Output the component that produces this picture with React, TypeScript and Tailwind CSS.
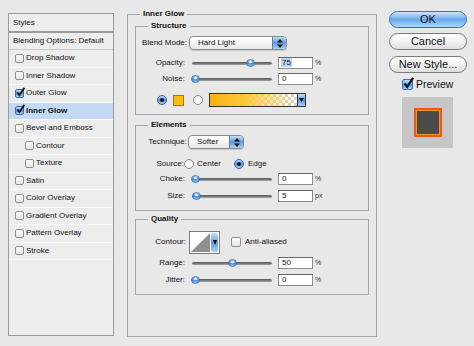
import React from "react";

function Box({ checked = false, size = "s" }: { checked?: boolean; size?: "s" | "m" | "l" }) {
  const dim =
    size === "l" ? "w-[11px] h-[11px]" : size === "m" ? "w-[10px] h-[10px]" : "w-[9px] h-[9px]";
  return (
    <span
      className={`relative inline-block shrink-0 rounded-[2px] border ${dim} ${
        checked
          ? "border-[#3b6cb0] bg-linear-to-b from-[#c2def9] via-[#5f9fe3] to-[#9fcdf7]"
          : "border-[#8e8e8e] bg-linear-to-b from-white to-[#e4e4e4]"
      }`}
    >
      {checked && (
        <svg
          className={`absolute left-[0px] ${size === "l" ? "top-[-3px]" : "top-[-3px]"}`}
          width={size === "l" ? 11 : 9}
          height={size === "l" ? 12 : 10}
          viewBox="0 0 10 11"
        >
          <path d="M1.3 6 L3.8 9 L9.3 0.8" fill="none" stroke="#151515" strokeWidth="2" />
        </svg>
      )}
    </span>
  );
}

function Radio({ on = false }: { on?: boolean }) {
  return on ? (
    <span className="flex h-[10px] w-[10px] shrink-0 items-center justify-center rounded-full border border-[#35609f] bg-linear-to-b from-[#c0defa] via-[#4f92dd] to-[#a5d2f8]">
      <span className="h-[4px] w-[4px] rounded-full bg-[#1a1a1a]" />
    </span>
  ) : (
    <span className="block h-[10px] w-[10px] shrink-0 rounded-full border border-[#8a8a8a] bg-linear-to-b from-[#eeeeee] to-white" />
  );
}

function Slider({ v }: { v: number }) {
  return (
    <div className="relative h-[12px] w-[82px] shrink-0">
      <div className="absolute left-[1px] right-[1px] top-[5px] h-[3px] rounded-full bg-linear-to-b from-[#555555] to-[#a5a5a5]" />
      <svg
        className="absolute top-[2px]"
        style={{ left: v * 73 }}
        width="9"
        height="8"
        viewBox="0 0 9 8"
      >
        <defs>
          <linearGradient id="thumbg" x1="0" y1="0" x2="0" y2="1">
            <stop offset="0" stopColor="#b9d9f8" />
            <stop offset="0.55" stopColor="#4a8cd8" />
            <stop offset="1" stopColor="#9ccaf5" />
          </linearGradient>
        </defs>
        <ellipse cx="4.5" cy="4" rx="4" ry="3.5" fill="url(#thumbg)" stroke="#3b68a8" strokeWidth="0.8" />
        <ellipse cx="4.5" cy="3.2" rx="1.6" ry="1.1" fill="#eaf4ff" />
      </svg>
    </div>
  );
}

function Field({ children, sel = false }: { children: React.ReactNode; sel?: boolean }) {
  return (
    <div className="h-[12px] w-[35px] shrink-0 border border-[#8c8c8c] border-t-[#666666] bg-white pl-[2px] text-[8px] leading-[10px]">
      {sel ? <span className="bg-[#b4d4fa] px-[1px]">{children}</span> : <span className="px-[1px]">{children}</span>}
    </div>
  );
}

function Arrows() {
  return (
    <svg width="6" height="9" viewBox="0 0 6 9">
      <path d="M3 0 L6 3.5 H0 Z M3 9 L0 5.5 H6 Z" fill="#111" />
    </svg>
  );
}

function Popup({ label, wide }: { label: string; wide?: boolean }) {
  return (
    <div
      className={`flex h-[14px] shrink-0 overflow-hidden rounded-[4px] border border-[#8a8a8a] bg-linear-to-b from-white to-[#e9e9e9] shadow-[0_1px_1px_rgba(0,0,0,0.15)] ${
        wide ? "w-[98px]" : "w-[56px]"
      }`}
    >
      <span className="flex-1 pl-[8px] text-[8px] leading-[12px]">{label}</span>
      <span className="flex w-[14px] items-center justify-center border-l border-[#5a7fb5] bg-linear-to-b from-[#c4e0fa] via-[#5a9ae0] to-[#a7d1f8]">
        <Arrows />
      </span>
    </div>
  );
}

function SliderRow({
  label,
  v,
  val,
  unit = "%",
  mt,
  sel,
}: {
  label: string;
  v: number;
  val: string;
  unit?: string;
  mt: string;
  sel?: boolean;
}) {
  return (
    <div className={`flex h-[12px] items-center ${mt}`}>
      <span className="w-[49px] shrink-0 text-right text-[8px] leading-[10px]">{label}</span>
      <span className="ml-[6px]">
        <Slider v={v} />
      </span>
      <span className="ml-[5px]">
        <Field sel={sel}>{val}</Field>
      </span>
      <span className="ml-[2px] text-[7px] leading-[10px] text-[#333]">{unit}</span>
    </div>
  );
}

const styleItems: { name: string; checked?: boolean; sel?: boolean; indent?: boolean }[] = [
  { name: "Drop Shadow" },
  { name: "Inner Shadow" },
  { name: "Outer Glow", checked: true },
  { name: "Inner Glow", checked: true, sel: true },
  { name: "Bevel and Emboss" },
  { name: "Contour", indent: true },
  { name: "Texture", indent: true },
  { name: "Satin" },
  { name: "Color Overlay" },
  { name: "Gradient Overlay" },
  { name: "Pattern Overlay" },
  { name: "Stroke" },
];

export default function App() {
  return (
    <div className="flex h-[346px] w-[474px] items-start overflow-hidden bg-[#e8e8e8] pl-[8px] pt-[8px] font-['Liberation_Sans',Arial,sans-serif] text-[#111]">
      {/* Styles list */}
      <div className="mt-[5px] flex h-[323px] w-[106px] shrink-0 flex-col border border-[#9b9b9b] bg-[#ededed]">
        <div className="flex h-[19px] shrink-0 items-center border-b-2 border-[#9a9a9a] pl-[4px] text-[8px]">
          Styles
        </div>
        <div className="flex h-[17px] shrink-0 items-center border-b border-[#c9c9c9] pl-[4px] text-[8px]">
          Blending Options: Default
        </div>
        {styleItems.map((it) => (
          <div
            key={it.name}
            className={`flex h-[17.5px] shrink-0 items-center border-b border-[#f8f8f8] text-[8px] ${
              it.indent ? "pl-[16px]" : "pl-[6px]"
            } ${it.sel ? "bg-[#c3d9f4] font-bold" : ""}`}
          >
            <Box checked={it.checked} />
            <span className="ml-[2px]">{it.name}</span>
          </div>
        ))}
      </div>

      {/* Inner Glow group */}
      <fieldset className="ml-[13px] mt-[1px] h-[328px] w-[250px] shrink-0 border border-[#a6a6a6] px-[7px] pt-[2px]">
        <legend className="ml-[5px] px-[3px] text-[8px] font-bold leading-[10px]">Inner Glow</legend>

        {/* Structure */}
        <fieldset className="h-[94px] w-[234px] border border-[#a6a6a6]">
          <legend className="ml-[12px] px-[3px] text-[8px] font-bold leading-[10px]">Structure</legend>
          <div className="mt-[5px] flex h-[14px] items-center">
            <span className="w-[51px] shrink-0 text-right text-[8px] leading-[10px]">Blend Mode:</span>
            <span className="ml-[2px]">
              <Popup label="Hard Light" wide />
            </span>
          </div>
          <SliderRow label="Opacity:" v={0.75} val="75" mt="mt-[7px]" sel />
          <SliderRow label="Noise:" v={0} val="0" mt="mt-[4px]" />
          <div className="mt-[8px] flex h-[14px] items-center pl-[21px]">
            <Radio on />
            <span className="ml-[6px] h-[11px] w-[11px] shrink-0 border border-[#a07a10] bg-[#fdbd12]" />
            <span className="ml-[9px]">
              <Radio />
            </span>
            <div className="ml-[6px] flex h-[14px] w-[97px] shrink-0 border border-[#333333]">
              <div className="flex-1 bg-[repeating-conic-gradient(#d4d4d4_0%_25%,#ffffff_0%_50%)] bg-[length:6px_6px]">
                <div className="h-full w-full bg-linear-to-r from-[#fdb200] via-[#fdc83a] via-40% to-[rgba(255,220,120,0)]" />
              </div>
              <div className="flex w-[8px] items-center justify-center border-l border-[#333] bg-linear-to-b from-[#c4e0fa] via-[#5a9ae0] to-[#a7d1f8]">
                <svg width="5" height="4" viewBox="0 0 5 4">
                  <path d="M0 0 H5 L2.5 4 Z" fill="#111" />
                </svg>
              </div>
            </div>
          </div>
        </fieldset>

        {/* Elements */}
        <fieldset className="mt-[5px] h-[91px] w-[234px] border border-[#a6a6a6]">
          <legend className="ml-[12px] px-[3px] text-[8px] font-bold leading-[10px]">Elements</legend>
          <div className="mt-[5px] flex h-[14px] items-center">
            <span className="w-[51px] shrink-0 text-right text-[8px] leading-[10px]">Technique:</span>
            <span className="ml-[1px]">
              <Popup label="Softer" />
            </span>
          </div>
          <div className="mt-[9px] flex h-[12px] items-center text-[8px] leading-[10px]">
            <span className="w-[48px] shrink-0 text-right">Source:</span>
            <Radio />
            <span className="ml-[3px]">Center</span>
            <span className="ml-[13px]">
              <Radio on />
            </span>
            <span className="ml-[4px]">Edge</span>
          </div>
          <SliderRow label="Choke:" v={0} val="0" mt="mt-[3px]" />
          <SliderRow label="Size:" v={0.02} val="5" unit="px" mt="mt-[5px]" />
        </fieldset>

        {/* Quality */}
        <fieldset className="mt-[3px] h-[81px] w-[234px] border border-[#a6a6a6]">
          <legend className="ml-[12px] px-[3px] text-[8px] font-bold leading-[10px]">Quality</legend>
          <div className="mt-[7px] flex h-[22px] items-center">
            <span className="w-[50px] shrink-0 text-right text-[8px] leading-[10px]">Contour:</span>
            <div className="ml-[3px] flex h-[23px] w-[31px] shrink-0 border border-[#7a7a7a] bg-white">
              <svg className="flex-1" viewBox="0 0 23 21" preserveAspectRatio="none">
                <polygon points="1,20 22,1 22,20" fill="#8f8f8f" />
              </svg>
              <div className="my-[1px] mr-[1px] flex w-[7px] items-center justify-center rounded-[2px] bg-linear-to-b from-[#c4e0fa] via-[#5a9ae0] to-[#a7d1f8]">
                <svg width="4" height="5" viewBox="0 0 4 5">
                  <path d="M0 0 H4 L2 5 Z" fill="#111" />
                </svg>
              </div>
            </div>
            <span className="ml-[11px] flex">
              <Box size="m" />
            </span>
            <span className="ml-[4px] text-[8px] leading-[10px]">Anti-aliased</span>
          </div>
          <SliderRow label="Range:" v={0.5} val="50" mt="mt-[4px]" />
          <SliderRow label="Jitter:" v={0} val="0" mt="mt-[5px]" />
        </fieldset>
      </fieldset>

      {/* Right column */}
      <div className="ml-[12px] mt-[3px] flex w-[78px] shrink-0 flex-col">
        <div className="flex h-[17px] items-center justify-center rounded-full border border-[#3e6db1] bg-linear-to-b from-[#cfe6fb] via-[#6aa9ec] to-[#aad6fb] text-[11px] leading-none">
          OK
        </div>
        <div className="mt-[5px] flex h-[17px] items-center justify-center rounded-full border border-[#7a7a7a] bg-linear-to-b from-white via-[#f3f3f3] to-[#dcdcdc] text-[11px] leading-none">
          Cancel
        </div>
        <div className="mt-[6px] flex h-[17px] items-center justify-center rounded-full border border-[#7a7a7a] bg-linear-to-b from-white via-[#f3f3f3] to-[#dcdcdc] text-[11px] leading-none">
          New Style...
        </div>
        <div className="ml-[13px] mt-[5px] flex h-[13px] items-center">
          <Box checked size="l" />
          <span className="ml-[3px] text-[10.5px] leading-none">Preview</span>
        </div>
        <div className="ml-[13px] mt-[6px] flex h-[51px] w-[51px] items-center justify-center bg-[#c6c6c6]">
          <div className="h-[29px] w-[28px] border-2 border-[#f4511c] bg-[#4a4a4a] shadow-[inset_0_0_0_1px_#e0a020]" />
        </div>
      </div>
    </div>
  );
}
